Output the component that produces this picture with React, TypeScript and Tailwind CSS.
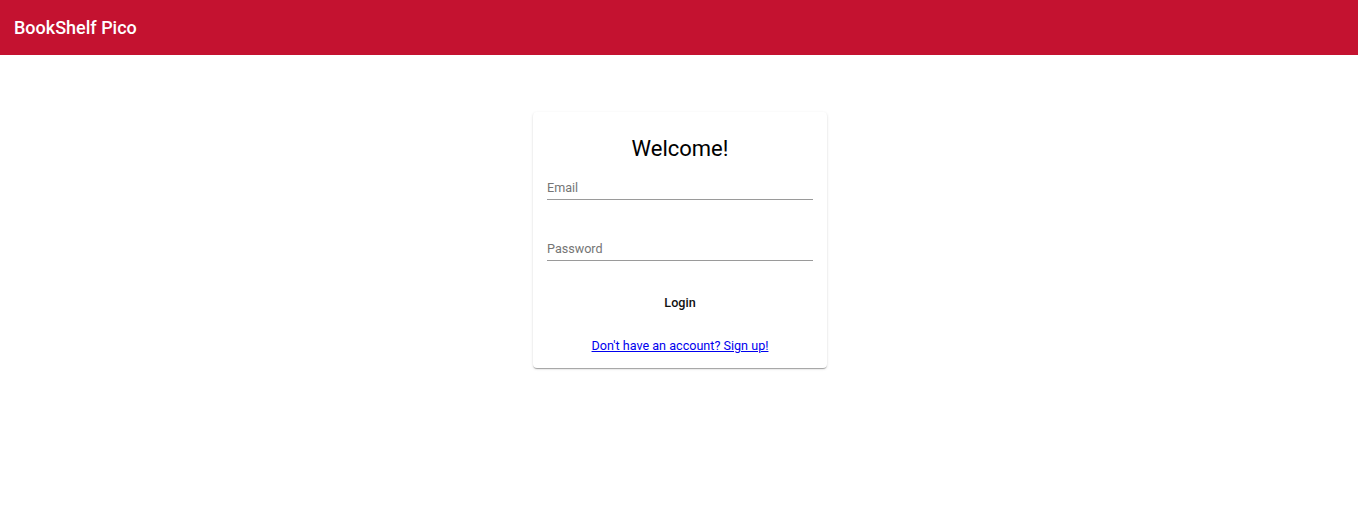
import React from "react";

export default function App() {
  return (
    <div className="min-h-screen bg-white" style={{ fontFamily: "Roboto, 'Liberation Sans', sans-serif" }}>
      <header className="h-[55px] bg-[#c41230] flex items-center px-[14px]">
        <h1 className="text-white text-[18px] font-medium leading-none">BookShelf Pico</h1>
      </header>
      <main className="flex justify-center pt-[57px] pl-[2px]">
        <div className="w-[294px] bg-white rounded-[4px] shadow-[0_2px_1px_-1px_rgba(0,0,0,0.2),0_1px_1px_0_rgba(0,0,0,0.14),0_1px_3px_0_rgba(0,0,0,0.12)] px-[14px] pt-[22px] pb-[12px] flex flex-col">
          <h2 className="text-center text-[22px] leading-[30px] font-normal text-black">Welcome!</h2>
          <div className="mt-[12px] h-[24px] border-b-[1.5px] border-[#9a9a9a] flex items-center">
            <input
              placeholder="Email"
              className="w-full outline-none pt-[2px] text-[12.6px] text-[#757575] placeholder:text-[#757575] bg-transparent"
            />
          </div>
          <div className="mt-[37px] h-[24px] border-b-[1.5px] border-[#9a9a9a] flex items-center">
            <input
              type="password"
              placeholder="Password"
              className="w-full outline-none pt-[2px] text-[12.6px] text-[#757575] placeholder:text-[#757575] bg-transparent"
            />
          </div>
          <button className="mt-[24px] h-[36px] text-[12.6px] font-medium text-[#111] rounded self-center px-4">
            Login
          </button>
          <a href="#" className="mt-[15px] text-center text-[12.6px] leading-[20px] text-[#0000ee] underline">
            Don't have an account? Sign up!
          </a>
        </div>
      </main>
    </div>
  );
}
